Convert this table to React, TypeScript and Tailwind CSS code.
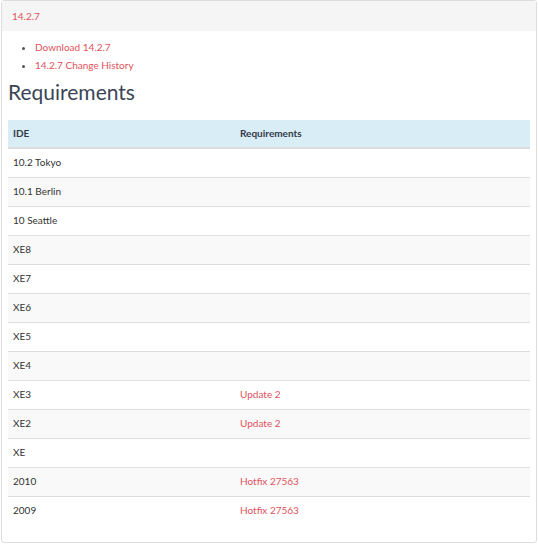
import React from 'react'

interface Row {
  ide: string
  req?: string
}

const rows: Row[] = [
  { ide: '10.2 Tokyo' },
  { ide: '10.1 Berlin' },
  { ide: '10 Seattle' },
  { ide: 'XE8' },
  { ide: 'XE7' },
  { ide: 'XE6' },
  { ide: 'XE5' },
  { ide: 'XE4' },
  { ide: 'XE3', req: 'Update 2' },
  { ide: 'XE2', req: 'Update 2' },
  { ide: 'XE' },
  { ide: '2010', req: 'Hotfix 27563' },
  { ide: '2009', req: 'Hotfix 27563' },
]

const App: React.FC = () => {
  return (
    <div className="w-[538px] h-[545px] bg-white pl-px font-['Lato',sans-serif] text-[10px] text-[#333]">
      <div className="w-[536px] h-[543px] border border-[#ddd] rounded-[3px]">
        {/* Panel heading */}
        <div className="h-[30px] bg-[#f5f5f5] px-[10px] flex items-center text-[#e0525c]">
          14.2.7
        </div>

        <div className="px-[6px]">
          <ul className="list-disc pl-[27px] pt-[7px] marker:text-[#555]">
            <li className="h-[18px] leading-[18px]">
              <a className="text-[#e0525c]">Download 14.2.7</a>
            </li>
            <li className="h-[18px] leading-[18px]">
              <a className="text-[#e0525c]">14.2.7 Change History</a>
            </li>
          </ul>

          <h2 className="text-[21px] leading-[26px] mt-[5px] text-[#3a4556]">Requirements</h2>

          <table className="w-[522px] mt-[15px] border-collapse">
            <thead>
              <tr className="bg-[#d9edf7] h-[28px] border-b-2 border-[#ddd]">
                <th className="w-[232px] text-left font-bold pl-[5px] text-[#333a48]">IDE</th>
                <th className="text-left font-bold text-[#333a48]">Requirements</th>
              </tr>
            </thead>
            <tbody>
              {rows.map((r, i) => (
                <tr
                  key={r.ide}
                  className={`h-[29px] ${i > 0 ? 'border-t border-[#ddd]' : ''} ${i % 2 === 1 ? 'bg-[#f9f9f9]' : 'bg-white'}`}
                >
                  <td className="pl-[5px]">{r.ide}</td>
                  <td className="text-[#e0525c]">{r.req}</td>
                </tr>
              ))}
            </tbody>
          </table>
        </div>
      </div>
    </div>
  )
}

export default App
